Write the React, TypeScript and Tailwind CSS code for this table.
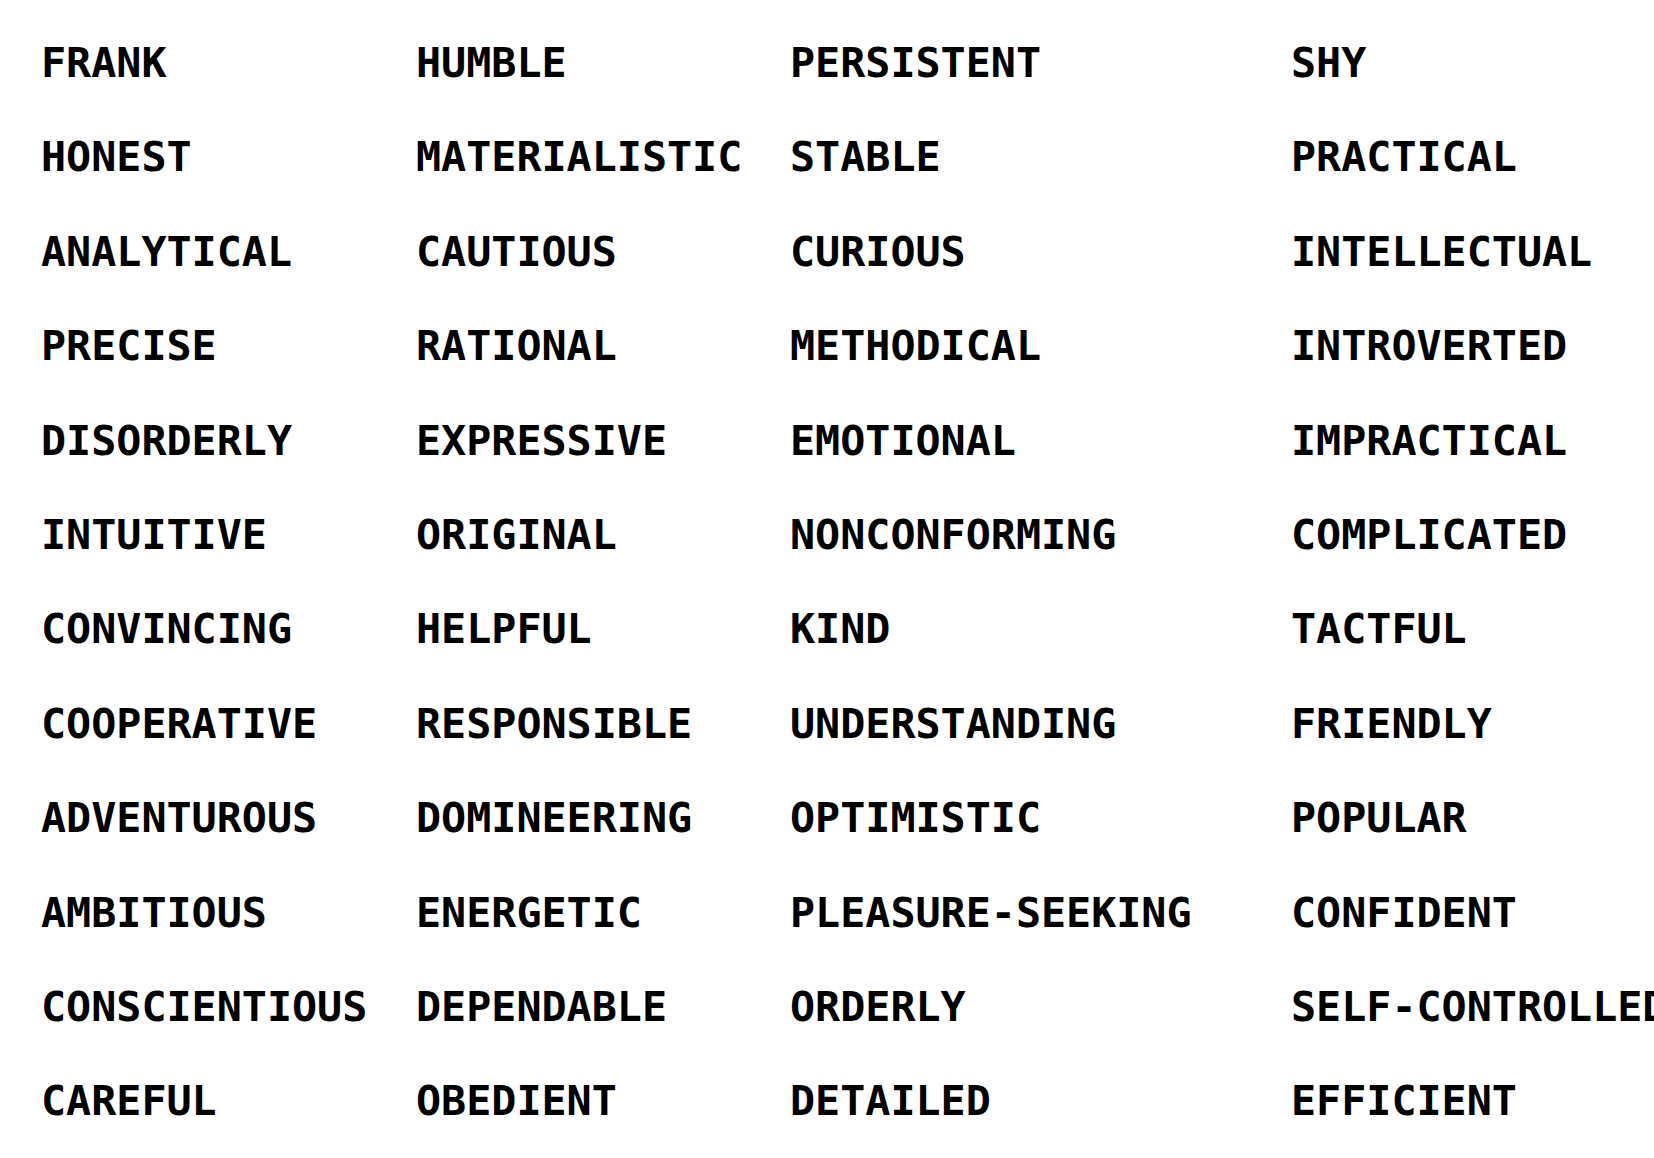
const rows: string[][] = [
  ["FRANK", "HUMBLE", "PERSISTENT", "SHY"],
  ["HONEST", "MATERIALISTIC", "STABLE", "PRACTICAL"],
  ["ANALYTICAL", "CAUTIOUS", "CURIOUS", "INTELLECTUAL"],
  ["PRECISE", "RATIONAL", "METHODICAL", "INTROVERTED"],
  ["DISORDERLY", "EXPRESSIVE", "EMOTIONAL", "IMPRACTICAL"],
  ["INTUITIVE", "ORIGINAL", "NONCONFORMING", "COMPLICATED"],
  ["CONVINCING", "HELPFUL", "KIND", "TACTFUL"],
  ["COOPERATIVE", "RESPONSIBLE", "UNDERSTANDING", "FRIENDLY"],
  ["ADVENTUROUS", "DOMINEERING", "OPTIMISTIC", "POPULAR"],
  ["AMBITIOUS", "ENERGETIC", "PLEASURE-SEEKING", "CONFIDENT"],
  ["CONSCIENTIOUS", "DEPENDABLE", "ORDERLY", "SELF-CONTROLLED"],
  ["CAREFUL", "OBEDIENT", "DETAILED", "EFFICIENT"],
];

export default function App() {
  return (
    <div className="w-[1654px] h-[1158px] overflow-hidden bg-white text-black">
      <div
        className="grid grid-cols-[375px_374px_501px_1fr] auto-rows-[94.4px] pl-[41px] pt-[16px] text-[41.7px] font-bold leading-[94.4px] whitespace-nowrap"
        style={{ fontFamily: '"DejaVu Sans Mono", monospace' }}
      >
        {rows.flat().map((word, i) => (
          <div key={i}>{word}</div>
        ))}
      </div>
    </div>
  );
}
